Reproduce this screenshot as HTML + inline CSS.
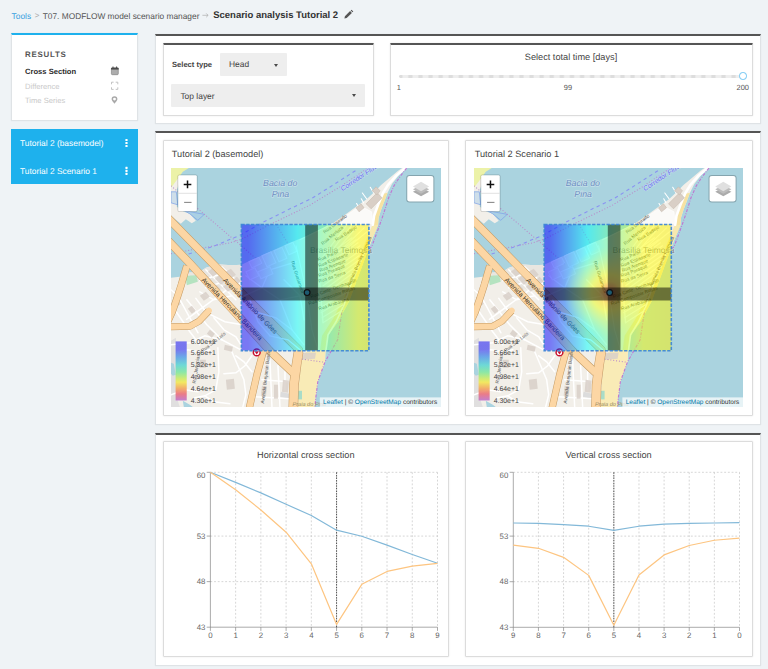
<!DOCTYPE html>
<html><head><meta charset="utf-8"><title>Scenario analysis</title>
<style>
*{box-sizing:border-box;margin:0;padding:0}
html,body{width:768px;height:669px;overflow:hidden}
body{text-rendering:geometricPrecision;background:#eff3f6;font-family:"Liberation Sans",Arial,sans-serif;color:#4a4a4a;position:relative;font-size:9.5px}
.abs{position:absolute}
.crumb{left:11.5px;top:9.8px;font-size:8.36px;line-height:12px;white-space:nowrap;color:#555}
.crumb a{color:#3a9fe0;text-decoration:none}
.crumb b{color:#333;font-size:9.5px}
.panel{background:#fff;border:1px solid #dfe3e6;box-shadow:0 0 1px rgba(0,0,0,.08)}
.card{background:#fff;border:1px solid #dcdcdc;border-radius:1px;box-shadow:0 0 2px rgba(0,0,0,.10)}
.dark{border-top:2px solid #555}
.side{left:11px;top:33px;width:127.3px;height:88px;border-top:2px solid #1eb1ed}
.side h4{position:absolute;left:13px;top:13.5px;font-size:7.9px;letter-spacing:.75px;color:#555;font-weight:bold;line-height:12px}
.side .it{position:absolute;left:13px;font-size:7.6px;line-height:10px;white-space:nowrap}
.side .on{font-weight:bold;color:#2b2b2b}
.side .off{color:#c9c9c9}
.blue{left:11px;top:128.5px;width:127.3px;height:55.5px;background:#1eb1ed;color:#fff}
.blue div{position:absolute;left:9px;font-size:8.4px;line-height:10px;white-space:nowrap}
.dots i{position:absolute;width:2.1px;height:2.1px;background:#fff;border-radius:.5px;left:0}
.sel{background:#eeeeee;border-radius:1px}
.ttl{font-size:9.2px;line-height:12px;white-space:nowrap;color:#444}
.caret{position:absolute;width:0;height:0;border-left:2.7px solid transparent;border-right:2.7px solid transparent;border-top:3px solid #4a4a4a}
</style></head><body>
<div class="abs crumb" style="left:11.6px"><a>Tools</a></div>
<div class="abs crumb" style="left:34.8px;color:#aaa;font-size:8px">&gt;</div>
<div class="abs crumb" style="left:42.7px">T07. MODFLOW model scenario manager</div>
<svg class="abs" style="left:201px;top:11px" width="10" height="8" viewBox="0 0 10 8"><path d="M1.4 4.3h5.6M5.2 2.4l1.9 1.9l-1.9 1.9" fill="none" stroke="#aaa" stroke-width=".7"/></svg>
<div class="abs crumb" style="left:213.2px;top:9.3px"><b>Scenario analysis Tutorial 2</b></div>
<svg class="abs" style="left:343px;top:9px" width="11" height="11" viewBox="0 0 11 11"><path d="M1.4 9.6l.5-2.3l5.2-5.2l1.8 1.8l-5.2 5.2z M7.7 1.5l.8-.8l1.8 1.8l-.8.8z" fill="#555"/></svg>

<div class="abs panel side">
 <h4>RESULTS</h4>
 <div class="it on" style="top:32px">Cross Section</div>
 <div class="it off" style="top:47px">Difference</div>
 <div class="it off" style="top:61px">Time Series</div>
</div>
<div class="abs blue">
 <div style="top:9.5px">Tutorial 2 (basemodel)</div>
 <div style="top:37.5px">Tutorial 2 Scenario 1</div>
</div>


<svg class="abs" style="left:0;top:0" width="160" height="200" viewBox="0 0 160 200">
<!-- calendar -->
<rect x="111.4" y="67.7" width="6.9" height="7" rx="1" fill="#adadad" stroke="#777" stroke-width=".6"/><path d="M111.1 68.7h7.5" stroke="#4a4a4a" stroke-width="1.7"/><path d="M113 66.5v1.6M116.6 66.5v1.6" stroke="#4a4a4a" stroke-width="1"/>
<!-- expand -->
<path d="M111.5 84.3v-2.1h2.1M115.7 82.2h2.1v2.1M117.8 87.3v2.1h-2.1M113.6 89.4h-2.1v-2.1" fill="none" stroke="#bcbcbc" stroke-width=".9"/>
<!-- marker -->
<path d="M114.5 96.2a2.9 2.9 0 0 1 2.9 2.9c0 1.8-2.9 4.6-2.9 4.6s-2.9-2.8-2.9-4.6a2.9 2.9 0 0 1 2.9-2.9z" fill="#a9a9a9"/><circle cx="114.5" cy="99.1" r="1.45" fill="#fff"/>
<!-- kebab -->
<g fill="#fff"><rect x="125.4" y="138.9" width="2.2" height="2.2" rx=".4"/><rect x="125.4" y="141.9" width="2.2" height="2.2" rx=".4"/><rect x="125.4" y="144.9" width="2.2" height="2.2" rx=".4"/>
<rect x="125.4" y="166.7" width="2.2" height="2.2" rx=".4"/><rect x="125.4" y="169.7" width="2.2" height="2.2" rx=".4"/><rect x="125.4" y="172.7" width="2.2" height="2.2" rx=".4"/></g>
</svg>
<!-- top panel -->
<div class="abs panel dark" style="left:154.6px;top:34px;width:606.1px;height:90px"></div>
<div class="abs card dark" style="left:162.5px;top:43px;width:211.5px;height:72.5px"></div>
<div class="abs card dark" style="left:389.5px;top:43px;width:363px;height:72.5px"></div>
<div class="abs" style="left:172px;top:59.5px;font-size:7.6px;font-weight:bold;line-height:10px;color:#444;white-space:nowrap">Select type</div>
<div class="abs sel" style="left:220px;top:53.3px;width:66.7px;height:22.7px"><span class="abs ttl" style="left:9px;top:5.1px;font-size:8.45px">Head</span><span class="caret" style="left:54px;top:10.5px"></span></div>
<div class="abs sel" style="left:171.4px;top:84.2px;width:193.6px;height:22.8px"><span class="abs ttl" style="left:9px;top:5.6px;font-size:8.45px">Top layer</span><span class="caret" style="left:180.5px;top:10.3px"></span></div>
<div class="abs ttl" style="left:389.5px;width:363px;text-align:center;top:50.5px">Select total time [days]</div>
<div class="abs" style="left:398.5px;top:74.9px;width:341px;height:2.9px;background:repeating-linear-gradient(90deg,#dddddd 0,#dddddd 2.6px,#eeeeee 4.2px,#eeeeee 8.4px,#dddddd 10.1px);border-radius:1.4px"></div>
<div class="abs" style="left:739.4px;top:72.4px;width:7.4px;height:7.4px;border:1.5px solid #6cc4f3;border-radius:50%;background:#fff"></div>
<div class="abs" style="left:396.8px;top:83px;font-size:7.45px;line-height:9px;color:#555">1</div>
<div class="abs" style="left:548px;width:40px;text-align:center;top:83px;font-size:7.45px;line-height:9px;color:#555">99</div>
<div class="abs" style="left:709px;width:40px;text-align:right;top:83px;font-size:7.45px;line-height:9px;color:#555">200</div>

<!-- map panel -->
<div class="abs panel dark" style="left:154.6px;top:131.3px;width:606.1px;height:293.4px"></div>
<div class="abs card" style="left:162.8px;top:140.3px;width:286.5px;height:276.2px"></div>
<div class="abs card" style="left:464.8px;top:140.3px;width:287.8px;height:276.2px"></div>
<div class="abs ttl" style="left:171.8px;top:148px">Tutorial 2 (basemodel)</div>
<div class="abs ttl" style="left:474.7px;top:148px">Tutorial 2 Scenario 1</div>
<div class="abs" style="left:171.2px;top:168.2px;width:269.7px;height:238.7px;overflow:hidden"><svg width="100%" height="100%" preserveAspectRatio="none" viewBox="171.2 168.2 269.3 238.7" font-family="Liberation Sans, Arial, sans-serif" text-rendering="geometricPrecision" style="display:block">
<defs>
<linearGradient id="lg0" x1="0" y1="0" x2="0" y2="1">
<stop offset="0" stop-color="#6a66ee"/><stop offset=".14" stop-color="#6a6aee"/><stop offset=".26" stop-color="#5c9fe8"/><stop offset=".40" stop-color="#5fd6d4"/><stop offset=".52" stop-color="#7fe6a0"/><stop offset=".62" stop-color="#c4ea6c"/><stop offset=".69" stop-color="#f2e852"/><stop offset=".80" stop-color="#f2a45e"/><stop offset=".89" stop-color="#ea6f7c"/><stop offset="1" stop-color="#bf72cc"/>
</linearGradient>
</defs>
<rect x="171" y="168" width="270" height="240" fill="#aad3df"/>
<!-- land -->
<path d="M171.2 278L180 277L187 273L200 272L206 268L217 264.5L232 265.5L241.5 265L250 261L270 252L290 243L306 236.5L320 230L332.5 223.6L345 215L356 207L366.5 199.5L375 191.5L381 185.2L390 177.8L398 171L402 168.2L407 168.2L399 175L392 184L387.5 193L384.5 201L381 210L378.5 218L378 225L370.7 243L360 272L349 301.7L338 322L327.4 336.4L325.5 350.5L325 362L318 381L315.5 398L314.6 407.1L171.2 407.1Z" fill="#f2efe9"/>
<path d="M171.2 186L179 177L181 180L177 190L177 207L184 212L190 214L196 221L192 223.5L186 219.5L181 224L171.2 216Z" fill="#f2efe9"/>
<path d="M171.2 168.2H189L183 172L178 179L171.2 188Z" fill="#ecf2a8"/>

<!-- gray/landuse areas -->
<path d="M171.2 341L176 338L178 360L176 395L180 407.1L171.2 407.1Z" fill="#e0dfdf"/>
<path d="M281 392L298 396L297 401L280 397Z" fill="#dcdcdc"/>
<path d="M186 273L200 272L206 268L217 264.5L232 265.5L241.5 265L241.5 292L225 290L210 285L196 280Z" fill="#e9e6e0"/>
<path d="M185.5 276L196.5 275.5L198 282L187 285.5Z" fill="#b5e3c0"/>
<!-- beach -->
<path d="M387.5 193L384.5 201L381 210L378.5 218L378 225L374 235L371 236L373.5 222L375 212L378.5 203L383 194Z" fill="#f6e2a2"/>
<path d="M303 357.8L306 352L325.5 350.5L325 362L318 381L315.5 398L314.6 407.1L298 407.1L299 385L301 365Z" fill="#f9ebb6"/>
<path d="M378 225L370.7 243L360 272L349 301.7L338 322L327.4 336.4L325.5 350.5L320 351L322 336L333 319L344 298L355 270L365 243L372 226Z" fill="#f6e8b0"/>
<rect x="296.7" y="391" width="5.3" height="8.6" fill="#a9dcc8"/>
<!-- water channel bottom-left -->
<path d="M171.2 363L174 364L176 375L173 376L171.2 374Z M183 401L190 405L193 407.1L184 407.1Z" fill="#aad3df"/>
<!-- marinas -->
<path d="M171.2 192L176.5 192L178 205L171.2 203Z M185 211L204.5 214.5L198 220.5L190 214Z" fill="#a9cdea" fill-opacity=".5" stroke="#7a9fe8" stroke-width=".7"/>
<!-- white streets -->
<g fill="none" stroke="#ffffff" stroke-width="1.5" stroke-linecap="round">
<path d="M179.4 298.6L198.2 333"/><path d="M196 298.6L204.5 310"/><path d="M186.7 319.5L229.6 288"/><path d="M209.7 314.3L225 322L241 324.7"/>
<path d="M187 300L207 325L222 340"/><path d="M200 292L214 300L232 296"/><path d="M214 318L224 330L236 337L241 345"/>
<path d="M175 310L190 332L200 345"/><path d="M171.2 345L190 343L205 336L222 340L241 350"/>
<path d="M218 348L219 372L216 390L205 396L195 398"/><path d="M224 374L236 373L245 366L252 356"/><path d="M232 352L238 366L244 380L246 395L243 407"/>
<path d="M178 352L188 350L200 352L210 350"/><path d="M205 396L214 402L230 404"/><path d="M171.2 395L185 390L198 392"/>
<path d="M270 360L272 407"/><path d="M278 366L280 407"/><path d="M285 372L285 390"/><path d="M255 397L290 399"/><path d="M262 380L288 382"/>
<path d="M236 356L244 362L252 372"/><path d="M171.2 290L178 296"/>
<path d="M206 270L236 300"/><path d="M214 268L241 294"/><path d="M222 267L241 285"/><path d="M200 281L222 274"/><path d="M206 288L232 279"/>
</g>
<g fill="#d9d0c9" opacity=".85">
<path d="M208 272l4 -3l5 5l-4 3z M215 279l4 -3l6 6l-4 3z M223 287l4 -3l5 5l-4 3z M203 280l5 -3.5l4 4.5l-5 3.5z M211 288l5 -3.5l5 5l-5 3.5z M200 296l6 -4l4 5l-6 4z M226 272l5 -3l5 6l-4 3z M233 280l4 -3l4 4.5l-4 3z"/>
<path d="M232 312l5 -3l4 5l-5 3z M224 303l5 -3l4 5l-5 3z M283 380l6 1l-1 12l-6 -1z M274 385l4 0l0 14l-4 0z M262 386l5 1l-1 10l-5 -1z M300 353l16 0l-1 6l-14 1z"/>
<path d="M178 300l3 4l-4 3l-3 -4z M192 306l4 5l-4 3l-4 -5z M210 330l5 4l-3 4l-5 -4z M225 345l8 2l-1 5l-8 -2z M200 360l6 0l0 8l-6 0z M226 380l8 -1l1 10l-8 1z"/>
</g>
<!-- peninsula white road / lots -->
<g fill="none" stroke="#ffffff" stroke-linecap="round">
<path d="M405 168.2L396 176L388 185L383 193L378 205L374 216L372.7 225" stroke-width="2.6"/>
<path d="M345 216.5L356 209L365 208.5L371.5 212L372.5 223.6L340 223.6Z" fill="#fbfaf8" stroke-width=".6"/>
<path d="M370.2 187.5L373.5 193M362.3 193.2L366.5 199M361.2 199L363.5 203M356.5 203.7L358 206.3" stroke-width="1.1"/>
</g>
<g fill="#d9cfc6" stroke="#c2b5a8" stroke-width=".5">
<path d="M366 204L377 193L382 198L371 209Z"/><path d="M356 208L361 204L364 208L359 212Z"/><path d="M372 191L376 187L380 191L377 195Z"/>
</g>
<!-- dotted / dashed sea lines -->
<g fill="none">
<g stroke="#b98acb" stroke-width="1.05" stroke-dasharray="1 1.9">
<path d="M171.2 186L197 208L204.5 214.5L230 236.4L241.5 246L262 264"/>
<path d="M171.2 253.9L205 247.7L230 243.1L241 239.6L272.4 223.6L310 205.3L340 187L366.5 169.2"/>
<path d="M302 359.3L324.6 362.5"/><path d="M276.3 224.7L290 247"/>
</g>
<path d="M188.8 254.3L215 246L241 235L261 223.6L290 209L312 198.5L335 184L358 169.2" stroke="#8a92f2" stroke-width="1.1" stroke-dasharray="3.4 3.4"/>
<path d="M406.5 168.2L399 178L394 185.8L388.5 198L383.5 214L377.5 231L371.5 247L362.3 253.7L357 268L350 285.8L343 305L337.6 340L325 362L317.8 381.8L315.7 398.5L315 407" stroke="#bf78d2" stroke-width="1.15" stroke-dasharray="3 1.4 .9 1.4"/>
</g>
<!-- orange roads -->
<g fill="none" stroke-linejoin="round" stroke-linecap="butt">
<g stroke="#c49a62" stroke-width="9.6"><path d="M298.6 352L296.5 365L294 385L293.3 410"/></g><g stroke="#c49a62" stroke-width="8.1"><path d="M166 216L241.5 293L299 350L298.6 353"/><path d="M166 238.5L190 263.5L241.5 319.5L269.5 350.7L293 373"/></g>
<g stroke="#c49a62" stroke-width="7.2"><path d="M187 266L181.5 285L177 299L172.5 312L167 324"/><path d="M263.5 351L257 375L249 410"/></g>
<g stroke="#c49a62" stroke-width="7"><path d="M168 327L190 326.5L199 321.5L209 311"/></g>
<g stroke="#fcd6a4" stroke-width="8.6"><path d="M298.6 352L296.5 365L294 385L293.3 410"/></g><g stroke="#fcd6a4" stroke-width="7.1"><path d="M166 216L241.5 293L299 350L298.6 353"/><path d="M166 238.5L190 263.5L241.5 319.5L269.5 350.7L293 373"/></g>
<g stroke="#fcd6a4" stroke-width="6.2"><path d="M187 266L181.5 285L177 299L172.5 312L167 324"/><path d="M263.5 351L257 375L249 410"/></g>
<g stroke="#fcd6a4" stroke-width="6"><path d="M168 327L190 326.5L199 321.5L209 311" stroke-linecap="round"/></g>
</g>


<!-- streets inside model area -->
<g fill="none" stroke="#ffffff" stroke-linecap="round">
<g stroke-width="1.1">
<path d="M318 262L352 238M318 266L356 240M319 270L358 243M320 274L360 246M321 278L360 251M322 282L359 256M323 286L358 261M324 290L357 266M325 294L356 271"/>
<path d="M322 258L346 226M327 257L352 225M333 254L358 226M339 252L364 228M345 250L367 232"/>
<path d="M318 298L352 280M319 303L350 286M320 308L348 292M321 313L346 298M322 318L343 305M323 323L340 312"/>
<path d="M296 246L306 290L312 330L318 350"/><path d="M300 240L332.5 224"/>
<path d="M365 251L358 268L350 287L344 305L336 322L328 335L326 350" stroke-width="1.6"/>
<path d="M318 262L323 323" stroke-width="1.4"/>
</g>
<g stroke-width="1.3">
<path d="M244 296L262 288L280 300L300 296"/><path d="M262 288L270 270L296 262"/><path d="M280 300L292 330L304 345"/><path d="M256 312L276 318L292 330"/><path d="M270 336L288 340L300 350"/>
<path d="M250 300L258 322L270 336"/><path d="M284 280L300 296L304 320"/><path d="M246 276L262 288"/>
</g>
<g stroke-width="1" fill="#f6f4f0">
<path d="M249 262l10 -4.5l3 6l-10 4.5z M262 256l9 -4l5 11l-9 4z M274 251l8 -3.5l5 11l-8 3.5z M285 246l8 -3.5l4 9l-8 3.5z M246 272l9 -4l4 8l-9 4z M258 272l12 -5l3 7l-12 5z"/>
</g>
</g>
<g font-size="4.75" fill="#1f2a24" fill-opacity=".88">
<text transform="translate(324.8 234) rotate(-37.5)">Rua Dourado</text><text transform="translate(322.8 245.4) rotate(-39.5)">Rua Merluza</text><text transform="translate(336.3 241.8) rotate(-33)">Rua Badejo</text>
<text transform="translate(318.5 261.8) rotate(-23)">Rua Pará</text><text transform="translate(319 267.5) rotate(-21.5)">Rua Espadarte</text><text transform="translate(320 272.3) rotate(-21)">Rua Arenque</text><text transform="translate(319 277.5) rotate(-20.5)">Rua Poraquê</text><text transform="translate(319 283.3) rotate(-19)">Rua da Serra</text>
<text transform="translate(311 298.5) rotate(-20)">Rua Cmte. Dermarciah</text><text transform="translate(309 305.5) rotate(-19)">Rua Compositor Rosas</text><text transform="translate(319 310.5) rotate(-18)">Rua Arabaiana</text>
<text transform="translate(291 262) rotate(72)">Rua Guaiamum</text>
<text transform="translate(349.5 287.5) rotate(-66)">Avenida Brasília Formosa</text>
</g>
<text x="310" y="252.8" font-size="8.5" fill="#6e6e6e" fill-opacity=".85" textLength="62" stroke="#fff" stroke-opacity=".5" stroke-width=".8" paint-order="stroke">Brasília Teimosa</text>
<!-- labels -->
<g font-style="italic" font-size="8.8" fill="#6d8fc2" text-anchor="middle" stroke="#c6e0ea" stroke-width="1.4" paint-order="stroke" stroke-linejoin="round"><text x="280.2" y="186.4">Bacia do</text><text x="280.5" y="197.6">Pina</text></g>
<text transform="translate(342.5 191.5) rotate(-33.7)" font-size="6.9" font-style="italic" fill="#6c6cf2" stroke="#c6e0ea" stroke-width="1" paint-order="stroke">Corredor Fluvial</text>
<g font-size="6.6" fill="#3a3326" stroke="#fcd6a4" stroke-width=".6" paint-order="stroke">
<text transform="translate(201.5 280.5) rotate(46)">Avenida Herculano Bandeira</text>
<text transform="translate(223 281) rotate(46)">Avenida Antônio de Góes</text>
</g>
<g font-size="4.8" fill="#555">
<text transform="translate(203 352.5) rotate(-38)">Rua São Luís</text>
<text transform="translate(196 384) rotate(-82)">Rua Jeremias</text>
<text transform="translate(264 404) rotate(-83)">Avenida Benjamin Basílio</text>
</g>
<text x="292.5" y="405.8" font-size="5.6" font-style="italic" fill="#9a8b60">Praia do Pina</text>
<!-- marker -->
<circle cx="256.8" cy="352.6" r="3.4" fill="#fff" stroke="#c8102e" stroke-width="1.5"/><path d="M254.6 351.5h4.4l-2.2 3.2z" fill="#c8102e"/>
<defs><linearGradient id="h0" x1="0" y1="0" x2="1" y2="0" color-interpolation="sRGB"><stop offset="0" stop-color="#0000ff"/><stop offset=".05" stop-color="#0000ff"/><stop offset=".44" stop-color="#00ffff"/><stop offset=".92" stop-color="#ffff00"/><stop offset="1" stop-color="#fff400"/></linearGradient></defs>
<rect x="241.5" y="224.7" width="127.3" height="126" fill="url(#h0)" opacity=".5"/>
<rect x="305.2" y="224.7" width="12.7" height="126" fill="#000" opacity=".5"/>
<rect x="241.5" y="287.7" width="127.3" height="13" fill="#000" opacity=".5"/>
<rect x="241.5" y="224.7" width="127.3" height="126.3" fill="none" stroke="#3c86d6" stroke-opacity=".92" stroke-width="1.6" stroke-dasharray="3.3 1.5"/>
<circle cx="307.1" cy="292.8" r="2.9" fill="#1d5a70" stroke="#111" stroke-width="1.2"/>

<!-- legend -->
<rect x="175.8" y="341.6" width="11.1" height="59.1" fill="url(#lg0)" opacity=".9"/>
<g font-size="6.9" fill="#444"><text x="190.9" y="343.8">6.00e+1</text><text x="190.9" y="355.6">5.66e+1</text><text x="190.9" y="367.5">5.32e+1</text><text x="190.9" y="379.3">4.98e+1</text><text x="190.9" y="391.1">4.64e+1</text><text x="190.9" y="403">4.30e+1</text></g>

<!-- zoom control -->
<rect x="177.6" y="174.7" width="20.2" height="37.6" rx="2" fill="#000" fill-opacity=".18"/>
<rect x="178.4" y="175.5" width="18.6" height="36" rx="1.2" fill="#fff"/>
<path d="M178.4 193.5H197" stroke="#ccc" stroke-width=".6"/>
<path d="M183.9 184.6h7.6M187.7 180.8v7.6" stroke="#111" stroke-width="1.5"/>
<path d="M184.3 202.6h7.4" stroke="#8a8a8a" stroke-width="1.1"/>
<!-- layers control -->
<rect x="406.1" y="175.1" width="28.1" height="27.6" rx="3.2" fill="#000" fill-opacity=".22"/>
<rect x="407.1" y="176.1" width="26.1" height="25.6" rx="2.2" fill="#fff"/>
<g stroke-linejoin="round"><path d="M412.8 191.9l8.1 -4l8.1 4l-8.1 4.6z" fill="#ababab"/><path d="M412.8 189.4l8.1 -4l8.1 4l-8.1 4.6z" fill="#bcbcbc"/><path d="M412.8 186.6l8.1 -4.6l8.1 4.6l-8.1 4.8z" fill="#e0e0e0"/></g>
<!-- attribution -->
<rect x="319.8" y="397.6" width="121" height="10" fill="#fff" fill-opacity=".72"/>
<text x="437" y="404.7" font-size="6.55" fill="#333" text-anchor="end"><tspan fill="#0078a8">Leaflet</tspan> | © <tspan fill="#0078a8">OpenStreetMap</tspan> contributors</text>
</svg>
</div>
<div class="abs" style="left:474.1px;top:168.2px;width:268.9px;height:238.7px;overflow:hidden"><svg width="100%" height="100%" preserveAspectRatio="none" viewBox="171.2 168.2 269.3 238.7" font-family="Liberation Sans, Arial, sans-serif" text-rendering="geometricPrecision" style="display:block">
<defs>
<linearGradient id="lg1" x1="0" y1="0" x2="0" y2="1">
<stop offset="0" stop-color="#6a66ee"/><stop offset=".14" stop-color="#6a6aee"/><stop offset=".26" stop-color="#5c9fe8"/><stop offset=".40" stop-color="#5fd6d4"/><stop offset=".52" stop-color="#7fe6a0"/><stop offset=".62" stop-color="#c4ea6c"/><stop offset=".69" stop-color="#f2e852"/><stop offset=".80" stop-color="#f2a45e"/><stop offset=".89" stop-color="#ea6f7c"/><stop offset="1" stop-color="#bf72cc"/>
</linearGradient>
</defs>
<rect x="171" y="168" width="270" height="240" fill="#aad3df"/>
<!-- land -->
<path d="M171.2 278L180 277L187 273L200 272L206 268L217 264.5L232 265.5L241.5 265L250 261L270 252L290 243L306 236.5L320 230L332.5 223.6L345 215L356 207L366.5 199.5L375 191.5L381 185.2L390 177.8L398 171L402 168.2L407 168.2L399 175L392 184L387.5 193L384.5 201L381 210L378.5 218L378 225L370.7 243L360 272L349 301.7L338 322L327.4 336.4L325.5 350.5L325 362L318 381L315.5 398L314.6 407.1L171.2 407.1Z" fill="#f2efe9"/>
<path d="M171.2 186L179 177L181 180L177 190L177 207L184 212L190 214L196 221L192 223.5L186 219.5L181 224L171.2 216Z" fill="#f2efe9"/>
<path d="M171.2 168.2H189L183 172L178 179L171.2 188Z" fill="#ecf2a8"/>

<!-- gray/landuse areas -->
<path d="M171.2 341L176 338L178 360L176 395L180 407.1L171.2 407.1Z" fill="#e0dfdf"/>
<path d="M281 392L298 396L297 401L280 397Z" fill="#dcdcdc"/>
<path d="M186 273L200 272L206 268L217 264.5L232 265.5L241.5 265L241.5 292L225 290L210 285L196 280Z" fill="#e9e6e0"/>
<path d="M185.5 276L196.5 275.5L198 282L187 285.5Z" fill="#b5e3c0"/>
<!-- beach -->
<path d="M387.5 193L384.5 201L381 210L378.5 218L378 225L374 235L371 236L373.5 222L375 212L378.5 203L383 194Z" fill="#f6e2a2"/>
<path d="M303 357.8L306 352L325.5 350.5L325 362L318 381L315.5 398L314.6 407.1L298 407.1L299 385L301 365Z" fill="#f9ebb6"/>
<path d="M378 225L370.7 243L360 272L349 301.7L338 322L327.4 336.4L325.5 350.5L320 351L322 336L333 319L344 298L355 270L365 243L372 226Z" fill="#f6e8b0"/>
<rect x="296.7" y="391" width="5.3" height="8.6" fill="#a9dcc8"/>
<!-- water channel bottom-left -->
<path d="M171.2 363L174 364L176 375L173 376L171.2 374Z M183 401L190 405L193 407.1L184 407.1Z" fill="#aad3df"/>
<!-- marinas -->
<path d="M171.2 192L176.5 192L178 205L171.2 203Z M185 211L204.5 214.5L198 220.5L190 214Z" fill="#a9cdea" fill-opacity=".5" stroke="#7a9fe8" stroke-width=".7"/>
<!-- white streets -->
<g fill="none" stroke="#ffffff" stroke-width="1.5" stroke-linecap="round">
<path d="M179.4 298.6L198.2 333"/><path d="M196 298.6L204.5 310"/><path d="M186.7 319.5L229.6 288"/><path d="M209.7 314.3L225 322L241 324.7"/>
<path d="M187 300L207 325L222 340"/><path d="M200 292L214 300L232 296"/><path d="M214 318L224 330L236 337L241 345"/>
<path d="M175 310L190 332L200 345"/><path d="M171.2 345L190 343L205 336L222 340L241 350"/>
<path d="M218 348L219 372L216 390L205 396L195 398"/><path d="M224 374L236 373L245 366L252 356"/><path d="M232 352L238 366L244 380L246 395L243 407"/>
<path d="M178 352L188 350L200 352L210 350"/><path d="M205 396L214 402L230 404"/><path d="M171.2 395L185 390L198 392"/>
<path d="M270 360L272 407"/><path d="M278 366L280 407"/><path d="M285 372L285 390"/><path d="M255 397L290 399"/><path d="M262 380L288 382"/>
<path d="M236 356L244 362L252 372"/><path d="M171.2 290L178 296"/>
<path d="M206 270L236 300"/><path d="M214 268L241 294"/><path d="M222 267L241 285"/><path d="M200 281L222 274"/><path d="M206 288L232 279"/>
</g>
<g fill="#d9d0c9" opacity=".85">
<path d="M208 272l4 -3l5 5l-4 3z M215 279l4 -3l6 6l-4 3z M223 287l4 -3l5 5l-4 3z M203 280l5 -3.5l4 4.5l-5 3.5z M211 288l5 -3.5l5 5l-5 3.5z M200 296l6 -4l4 5l-6 4z M226 272l5 -3l5 6l-4 3z M233 280l4 -3l4 4.5l-4 3z"/>
<path d="M232 312l5 -3l4 5l-5 3z M224 303l5 -3l4 5l-5 3z M283 380l6 1l-1 12l-6 -1z M274 385l4 0l0 14l-4 0z M262 386l5 1l-1 10l-5 -1z M300 353l16 0l-1 6l-14 1z"/>
<path d="M178 300l3 4l-4 3l-3 -4z M192 306l4 5l-4 3l-4 -5z M210 330l5 4l-3 4l-5 -4z M225 345l8 2l-1 5l-8 -2z M200 360l6 0l0 8l-6 0z M226 380l8 -1l1 10l-8 1z"/>
</g>
<!-- peninsula white road / lots -->
<g fill="none" stroke="#ffffff" stroke-linecap="round">
<path d="M405 168.2L396 176L388 185L383 193L378 205L374 216L372.7 225" stroke-width="2.6"/>
<path d="M345 216.5L356 209L365 208.5L371.5 212L372.5 223.6L340 223.6Z" fill="#fbfaf8" stroke-width=".6"/>
<path d="M370.2 187.5L373.5 193M362.3 193.2L366.5 199M361.2 199L363.5 203M356.5 203.7L358 206.3" stroke-width="1.1"/>
</g>
<g fill="#d9cfc6" stroke="#c2b5a8" stroke-width=".5">
<path d="M366 204L377 193L382 198L371 209Z"/><path d="M356 208L361 204L364 208L359 212Z"/><path d="M372 191L376 187L380 191L377 195Z"/>
</g>
<!-- dotted / dashed sea lines -->
<g fill="none">
<g stroke="#b98acb" stroke-width="1.05" stroke-dasharray="1 1.9">
<path d="M171.2 186L197 208L204.5 214.5L230 236.4L241.5 246L262 264"/>
<path d="M171.2 253.9L205 247.7L230 243.1L241 239.6L272.4 223.6L310 205.3L340 187L366.5 169.2"/>
<path d="M302 359.3L324.6 362.5"/><path d="M276.3 224.7L290 247"/>
</g>
<path d="M188.8 254.3L215 246L241 235L261 223.6L290 209L312 198.5L335 184L358 169.2" stroke="#8a92f2" stroke-width="1.1" stroke-dasharray="3.4 3.4"/>
<path d="M406.5 168.2L399 178L394 185.8L388.5 198L383.5 214L377.5 231L371.5 247L362.3 253.7L357 268L350 285.8L343 305L337.6 340L325 362L317.8 381.8L315.7 398.5L315 407" stroke="#bf78d2" stroke-width="1.15" stroke-dasharray="3 1.4 .9 1.4"/>
</g>
<!-- orange roads -->
<g fill="none" stroke-linejoin="round" stroke-linecap="butt">
<g stroke="#c49a62" stroke-width="9.6"><path d="M298.6 352L296.5 365L294 385L293.3 410"/></g><g stroke="#c49a62" stroke-width="8.1"><path d="M166 216L241.5 293L299 350L298.6 353"/><path d="M166 238.5L190 263.5L241.5 319.5L269.5 350.7L293 373"/></g>
<g stroke="#c49a62" stroke-width="7.2"><path d="M187 266L181.5 285L177 299L172.5 312L167 324"/><path d="M263.5 351L257 375L249 410"/></g>
<g stroke="#c49a62" stroke-width="7"><path d="M168 327L190 326.5L199 321.5L209 311"/></g>
<g stroke="#fcd6a4" stroke-width="8.6"><path d="M298.6 352L296.5 365L294 385L293.3 410"/></g><g stroke="#fcd6a4" stroke-width="7.1"><path d="M166 216L241.5 293L299 350L298.6 353"/><path d="M166 238.5L190 263.5L241.5 319.5L269.5 350.7L293 373"/></g>
<g stroke="#fcd6a4" stroke-width="6.2"><path d="M187 266L181.5 285L177 299L172.5 312L167 324"/><path d="M263.5 351L257 375L249 410"/></g>
<g stroke="#fcd6a4" stroke-width="6"><path d="M168 327L190 326.5L199 321.5L209 311" stroke-linecap="round"/></g>
</g>


<!-- streets inside model area -->
<g fill="none" stroke="#ffffff" stroke-linecap="round">
<g stroke-width="1.1">
<path d="M318 262L352 238M318 266L356 240M319 270L358 243M320 274L360 246M321 278L360 251M322 282L359 256M323 286L358 261M324 290L357 266M325 294L356 271"/>
<path d="M322 258L346 226M327 257L352 225M333 254L358 226M339 252L364 228M345 250L367 232"/>
<path d="M318 298L352 280M319 303L350 286M320 308L348 292M321 313L346 298M322 318L343 305M323 323L340 312"/>
<path d="M296 246L306 290L312 330L318 350"/><path d="M300 240L332.5 224"/>
<path d="M365 251L358 268L350 287L344 305L336 322L328 335L326 350" stroke-width="1.6"/>
<path d="M318 262L323 323" stroke-width="1.4"/>
</g>
<g stroke-width="1.3">
<path d="M244 296L262 288L280 300L300 296"/><path d="M262 288L270 270L296 262"/><path d="M280 300L292 330L304 345"/><path d="M256 312L276 318L292 330"/><path d="M270 336L288 340L300 350"/>
<path d="M250 300L258 322L270 336"/><path d="M284 280L300 296L304 320"/><path d="M246 276L262 288"/>
</g>
<g stroke-width="1" fill="#f6f4f0">
<path d="M249 262l10 -4.5l3 6l-10 4.5z M262 256l9 -4l5 11l-9 4z M274 251l8 -3.5l5 11l-8 3.5z M285 246l8 -3.5l4 9l-8 3.5z M246 272l9 -4l4 8l-9 4z M258 272l12 -5l3 7l-12 5z"/>
</g>
</g>
<g font-size="4.75" fill="#1f2a24" fill-opacity=".88">
<text transform="translate(324.8 234) rotate(-37.5)">Rua Dourado</text><text transform="translate(322.8 245.4) rotate(-39.5)">Rua Merluza</text><text transform="translate(336.3 241.8) rotate(-33)">Rua Badejo</text>
<text transform="translate(318.5 261.8) rotate(-23)">Rua Pará</text><text transform="translate(319 267.5) rotate(-21.5)">Rua Espadarte</text><text transform="translate(320 272.3) rotate(-21)">Rua Arenque</text><text transform="translate(319 277.5) rotate(-20.5)">Rua Poraquê</text><text transform="translate(319 283.3) rotate(-19)">Rua da Serra</text>
<text transform="translate(311 298.5) rotate(-20)">Rua Cmte. Dermarciah</text><text transform="translate(309 305.5) rotate(-19)">Rua Compositor Rosas</text><text transform="translate(319 310.5) rotate(-18)">Rua Arabaiana</text>
<text transform="translate(291 262) rotate(72)">Rua Guaiamum</text>
<text transform="translate(349.5 287.5) rotate(-66)">Avenida Brasília Formosa</text>
</g>
<text x="310" y="252.8" font-size="8.5" fill="#6e6e6e" fill-opacity=".85" textLength="62" stroke="#fff" stroke-opacity=".5" stroke-width=".8" paint-order="stroke">Brasília Teimosa</text>
<!-- labels -->
<g font-style="italic" font-size="8.8" fill="#6d8fc2" text-anchor="middle" stroke="#c6e0ea" stroke-width="1.4" paint-order="stroke" stroke-linejoin="round"><text x="280.2" y="186.4">Bacia do</text><text x="280.5" y="197.6">Pina</text></g>
<text transform="translate(342.5 191.5) rotate(-33.7)" font-size="6.9" font-style="italic" fill="#6c6cf2" stroke="#c6e0ea" stroke-width="1" paint-order="stroke">Corredor Fluvial</text>
<g font-size="6.6" fill="#3a3326" stroke="#fcd6a4" stroke-width=".6" paint-order="stroke">
<text transform="translate(201.5 280.5) rotate(46)">Avenida Herculano Bandeira</text>
<text transform="translate(223 281) rotate(46)">Avenida Antônio de Góes</text>
</g>
<g font-size="4.8" fill="#555">
<text transform="translate(203 352.5) rotate(-38)">Rua São Luís</text>
<text transform="translate(196 384) rotate(-82)">Rua Jeremias</text>
<text transform="translate(264 404) rotate(-83)">Avenida Benjamin Basílio</text>
</g>
<text x="292.5" y="405.8" font-size="5.6" font-style="italic" fill="#9a8b60">Praia do Pina</text>
<!-- marker -->
<circle cx="256.8" cy="352.6" r="3.4" fill="#fff" stroke="#c8102e" stroke-width="1.5"/><path d="M254.6 351.5h4.4l-2.2 3.2z" fill="#c8102e"/>
<defs><linearGradient id="h1" x1="0" y1="0" x2="1" y2="0"><stop offset="0" stop-color="#0000ff"/><stop offset=".04" stop-color="#0000ff"/><stop offset=".34" stop-color="#00ffff"/><stop offset=".78" stop-color="#ffff00"/><stop offset="1" stop-color="#fff400"/></linearGradient>
<radialGradient id="r1" cx="307.1" cy="292.8" r="46" gradientUnits="userSpaceOnUse"><stop offset="0" stop-color="#ff2060"/><stop offset=".1" stop-color="#ff8000"/><stop offset=".24" stop-color="#ffe000"/><stop offset=".4" stop-color="#ffff00" stop-opacity=".9"/><stop offset=".65" stop-color="#e8ff20" stop-opacity=".5"/><stop offset="1" stop-color="#b0ff50" stop-opacity="0"/></radialGradient></defs>
<g opacity=".5"><rect x="241.5" y="224.7" width="127.3" height="126" fill="url(#h1)"/>
<rect x="241.5" y="224.7" width="127.3" height="126" fill="url(#r1)"/></g>
<rect x="305.2" y="224.7" width="12.7" height="126" fill="#000" opacity=".5"/>
<rect x="241.5" y="287.7" width="127.3" height="13" fill="#000" opacity=".5"/>
<rect x="241.5" y="224.7" width="127.3" height="126.3" fill="none" stroke="#3c86d6" stroke-opacity=".92" stroke-width="1.6" stroke-dasharray="3.3 1.5"/>
<circle cx="307.1" cy="292.8" r="2.9" fill="#1d5a70" stroke="#111" stroke-width="1.2"/>

<!-- legend -->
<rect x="175.8" y="341.6" width="11.1" height="59.1" fill="url(#lg1)" opacity=".9"/>
<g font-size="6.9" fill="#444"><text x="190.9" y="343.8">6.00e+1</text><text x="190.9" y="355.6">5.66e+1</text><text x="190.9" y="367.5">5.32e+1</text><text x="190.9" y="379.3">4.98e+1</text><text x="190.9" y="391.1">4.64e+1</text><text x="190.9" y="403">4.30e+1</text></g>

<!-- zoom control -->
<rect x="177.6" y="174.7" width="20.2" height="37.6" rx="2" fill="#000" fill-opacity=".18"/>
<rect x="178.4" y="175.5" width="18.6" height="36" rx="1.2" fill="#fff"/>
<path d="M178.4 193.5H197" stroke="#ccc" stroke-width=".6"/>
<path d="M183.9 184.6h7.6M187.7 180.8v7.6" stroke="#111" stroke-width="1.5"/>
<path d="M184.3 202.6h7.4" stroke="#8a8a8a" stroke-width="1.1"/>
<!-- layers control -->
<rect x="406.1" y="175.1" width="28.1" height="27.6" rx="3.2" fill="#000" fill-opacity=".22"/>
<rect x="407.1" y="176.1" width="26.1" height="25.6" rx="2.2" fill="#fff"/>
<g stroke-linejoin="round"><path d="M412.8 191.9l8.1 -4l8.1 4l-8.1 4.6z" fill="#ababab"/><path d="M412.8 189.4l8.1 -4l8.1 4l-8.1 4.6z" fill="#bcbcbc"/><path d="M412.8 186.6l8.1 -4.6l8.1 4.6l-8.1 4.8z" fill="#e0e0e0"/></g>
<!-- attribution -->
<rect x="319.8" y="397.6" width="121" height="10" fill="#fff" fill-opacity=".72"/>
<text x="437" y="404.7" font-size="6.55" fill="#333" text-anchor="end"><tspan fill="#0078a8">Leaflet</tspan> | © <tspan fill="#0078a8">OpenStreetMap</tspan> contributors</text>
</svg>
</div>

<!-- chart panel -->
<div class="abs panel dark" style="left:154.6px;top:432.5px;width:606.1px;height:233.6px"></div>
<div class="abs card" style="left:162.8px;top:441px;width:286.5px;height:216px"></div>
<div class="abs card" style="left:464.8px;top:441px;width:287.8px;height:216px"></div>
<svg class="abs" style="left:0;top:0" width="768" height="669" viewBox="0 0 768 669" font-family="Liberation Sans, Arial, sans-serif" text-rendering="geometricPrecision">
<text x="305.8" y="458.1" font-size="9.2" fill="#444" text-anchor="middle">Horizontal cross section</text>
<path d="M235.63 472.30V627.20M260.87 472.30V627.20M286.10 472.30V627.20M311.33 472.30V627.20M336.57 472.30V627.20M361.80 472.30V627.20M387.03 472.30V627.20M412.27 472.30V627.20M437.50 472.30V627.20M210.40 472.30H437.50M210.40 536.08H437.50M210.40 581.64H437.50" stroke="#c8c8c8" stroke-width=".75" stroke-dasharray="1.85 1.85" fill="none"/>
<path d="M210.40 627.20H437.50M210.40 472.30V627.20M210.40 627.20v3.7M235.63 627.20v3.7M260.87 627.20v3.7M286.10 627.20v3.7M311.33 627.20v3.7M336.57 627.20v3.7M361.80 627.20v3.7M387.03 627.20v3.7M412.27 627.20v3.7M437.50 627.20v3.7M210.40 472.30h-3.7M210.40 536.08h-3.7M210.40 581.64h-3.7M210.40 627.20h-3.7" stroke="#777" stroke-width=".62" fill="none"/>
<text x="210.40" y="638.2" font-size="7.85" fill="#666" text-anchor="middle">0</text>
<text x="235.63" y="638.2" font-size="7.85" fill="#666" text-anchor="middle">1</text>
<text x="260.87" y="638.2" font-size="7.85" fill="#666" text-anchor="middle">2</text>
<text x="286.10" y="638.2" font-size="7.85" fill="#666" text-anchor="middle">3</text>
<text x="311.33" y="638.2" font-size="7.85" fill="#666" text-anchor="middle">4</text>
<text x="336.57" y="638.2" font-size="7.85" fill="#666" text-anchor="middle">5</text>
<text x="361.80" y="638.2" font-size="7.85" fill="#666" text-anchor="middle">6</text>
<text x="387.03" y="638.2" font-size="7.85" fill="#666" text-anchor="middle">7</text>
<text x="412.27" y="638.2" font-size="7.85" fill="#666" text-anchor="middle">8</text>
<text x="437.50" y="638.2" font-size="7.85" fill="#666" text-anchor="middle">9</text>
<text x="205.40" y="477.90" font-size="7.85" fill="#666" text-anchor="end">60</text>
<text x="205.40" y="538.78" font-size="7.85" fill="#666" text-anchor="end">53</text>
<text x="205.40" y="584.34" font-size="7.85" fill="#666" text-anchor="end">48</text>
<text x="205.40" y="629.70" font-size="7.85" fill="#666" text-anchor="end">43</text>
<path d="M336.57 472.30V627.20" stroke="#222" stroke-width=".75" stroke-dasharray="1.5 1.1" fill="none"/>
<path d="M210.40 472.25L235.63 482.38L260.87 492.90L286.10 504.23L311.33 515.56L336.57 530.20L361.80 536.22L387.03 545.14L412.27 554.46L437.50 563.28" stroke="#82b8d8" stroke-width="1.2" fill="none" stroke-linejoin="round"/>
<path d="M210.40 472.25L235.63 489.69L260.87 509.95L286.10 532.20L311.33 563.79L336.57 624.44L361.80 584.34L387.03 571.41L412.27 566.19L437.50 563.28" stroke="#fdc581" stroke-width="1.2" fill="none" stroke-linejoin="round"/>
</svg>
<svg class="abs" style="left:0;top:0" width="768" height="669" viewBox="0 0 768 669" font-family="Liberation Sans, Arial, sans-serif" text-rendering="geometricPrecision">
<text x="608.6" y="458.1" font-size="9.2" fill="#444" text-anchor="middle">Vertical cross section</text>
<path d="M538.43 472.30V627.30M563.57 472.30V627.30M588.70 472.30V627.30M613.83 472.30V627.30M638.97 472.30V627.30M664.10 472.30V627.30M689.23 472.30V627.30M714.37 472.30V627.30M739.50 472.30V627.30M513.30 472.30H739.50M513.30 536.12H739.50M513.30 581.71H739.50" stroke="#c8c8c8" stroke-width=".75" stroke-dasharray="1.85 1.85" fill="none"/>
<path d="M513.30 627.30H739.50M513.30 472.30V627.30M513.30 627.30v3.7M538.43 627.30v3.7M563.57 627.30v3.7M588.70 627.30v3.7M613.83 627.30v3.7M638.97 627.30v3.7M664.10 627.30v3.7M689.23 627.30v3.7M714.37 627.30v3.7M739.50 627.30v3.7M513.30 472.30h-3.7M513.30 536.12h-3.7M513.30 581.71h-3.7M513.30 627.30h-3.7" stroke="#777" stroke-width=".62" fill="none"/>
<text x="513.30" y="638.2" font-size="7.85" fill="#666" text-anchor="middle">9</text>
<text x="538.43" y="638.2" font-size="7.85" fill="#666" text-anchor="middle">8</text>
<text x="563.57" y="638.2" font-size="7.85" fill="#666" text-anchor="middle">7</text>
<text x="588.70" y="638.2" font-size="7.85" fill="#666" text-anchor="middle">6</text>
<text x="613.83" y="638.2" font-size="7.85" fill="#666" text-anchor="middle">5</text>
<text x="638.97" y="638.2" font-size="7.85" fill="#666" text-anchor="middle">4</text>
<text x="664.10" y="638.2" font-size="7.85" fill="#666" text-anchor="middle">3</text>
<text x="689.23" y="638.2" font-size="7.85" fill="#666" text-anchor="middle">2</text>
<text x="714.37" y="638.2" font-size="7.85" fill="#666" text-anchor="middle">1</text>
<text x="739.50" y="638.2" font-size="7.85" fill="#666" text-anchor="middle">0</text>
<text x="508.30" y="477.90" font-size="7.85" fill="#666" text-anchor="end">60</text>
<text x="508.30" y="538.82" font-size="7.85" fill="#666" text-anchor="end">53</text>
<text x="508.30" y="584.41" font-size="7.85" fill="#666" text-anchor="end">48</text>
<text x="508.30" y="629.80" font-size="7.85" fill="#666" text-anchor="end">43</text>
<path d="M613.83 472.30V627.30" stroke="#222" stroke-width=".75" stroke-dasharray="1.5 1.1" fill="none"/>
<path d="M513.30 523.01L538.43 523.41L563.57 524.62L588.70 526.22L613.83 530.34L638.97 526.22L664.10 524.22L689.23 523.41L714.37 523.01L739.50 522.61" stroke="#82b8d8" stroke-width="1.2" fill="none" stroke-linejoin="round"/>
<path d="M513.30 545.08L538.43 548.30L563.57 557.32L588.70 575.38L613.83 625.24L638.97 574.98L664.10 554.92L689.23 545.49L714.37 540.27L739.50 538.16" stroke="#fdc581" stroke-width="1.2" fill="none" stroke-linejoin="round"/>
</svg>
</body></html>
